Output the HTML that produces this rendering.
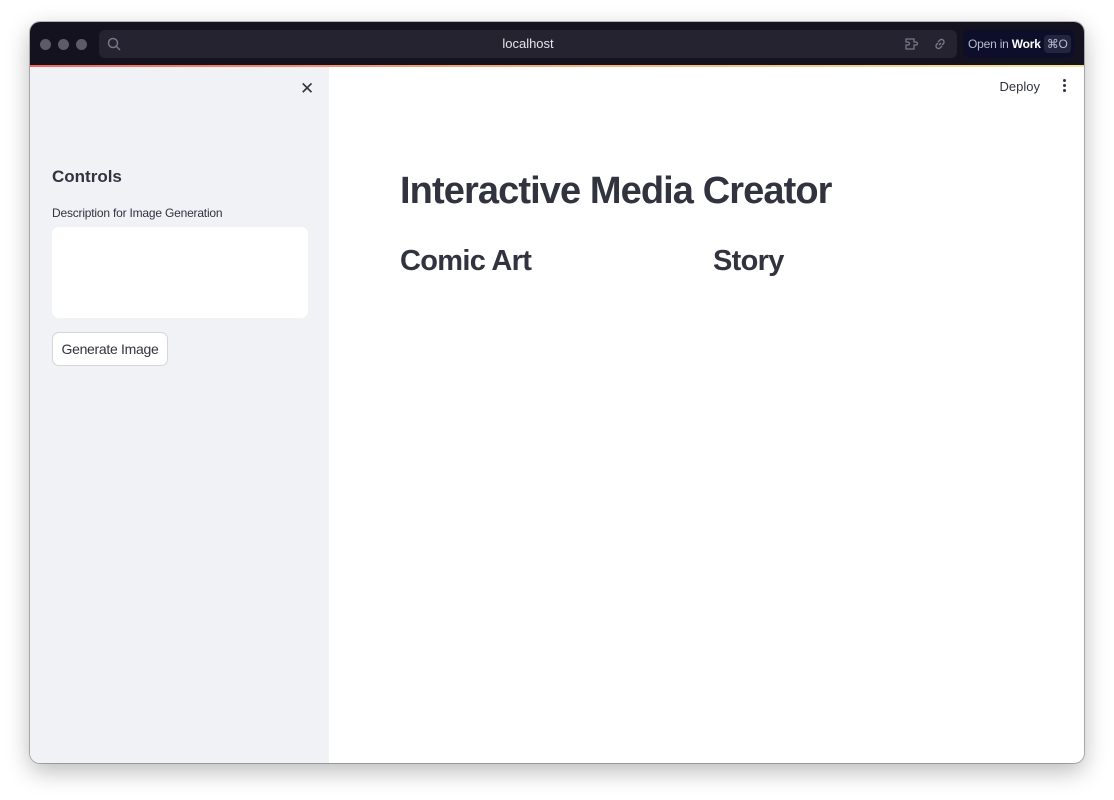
<!DOCTYPE html>
<html><head><meta charset="utf-8"><style>
*{box-sizing:border-box;margin:0;padding:0}
body{width:1114px;height:800px;background:#fff;font-family:"Liberation Sans",sans-serif;position:relative;overflow:hidden}
.win{position:absolute;left:30px;top:22px;width:1054px;height:741px;border-radius:10px;overflow:hidden;box-shadow:0 8px 24px rgba(0,0,0,.28),0 0 0 1px rgba(0,0,0,.25);background:#fff}
.bar{position:absolute;left:0;top:0;width:100%;height:43px;background:#14121f}
.dot{position:absolute;top:17px;width:11px;height:11px;border-radius:50%;background:#5d5c66}
.url{position:absolute;left:69px;top:8px;width:858px;height:28px;border-radius:6px;background:#25232f;color:#e4e4ea;font-size:13px;text-align:center;line-height:28px}
.open{position:absolute;left:933px;top:8px;width:112px;height:28px;border-radius:6px;background:#0d0f2a;color:#b9bad0;font-size:12px;line-height:28px;padding-left:5px;white-space:nowrap;letter-spacing:-0.2px}
.open b{color:#fff}
.open span{background:#23253e;padding:2px 3px;border-radius:4px;margin-left:3px}
.grad{position:absolute;left:0;top:43px;width:100%;height:2px;background:linear-gradient(90deg,#f06a5e,#f6b07a,#f6e39a)}
.side{position:absolute;left:0;top:45px;width:299px;height:696px;background:#f0f2f6}
.main{position:absolute;left:299px;top:45px;right:0;bottom:0;color:#31333f}
h3{position:absolute;left:22px;top:100px;font-size:17px;color:#31333f}
.lab{position:absolute;left:22px;top:139px;font-size:12px;color:#31333f;letter-spacing:-0.2px}
.ta{position:absolute;left:22px;top:160px;width:256px;height:91px;background:#fff;border-radius:7px}
.btn{position:absolute;left:22px;top:265px;width:116px;height:34px;border:1px solid #d5d6da;border-radius:7px;background:#fff;font-size:14px;line-height:32px;text-align:center;color:#31333f;letter-spacing:-0.3px}
.x{position:absolute;left:270px;top:12px;font-size:17px;color:#31333f}
</style></head><body>
<div class="win">
<div class="bar">
<div class="dot" style="left:10px"></div><div class="dot" style="left:28px"></div><div class="dot" style="left:46px"></div>
<div class="url">localhost
<svg style="position:absolute;left:8px;top:7px" width="14" height="14" viewBox="0 0 14 14" fill="none" stroke="#77768a" stroke-width="1.5"><circle cx="6" cy="6" r="4.5"/><path d="M9.5 9.5L13 13"/></svg>
<svg style="position:absolute;left:806px;top:7px" width="16" height="14" viewBox="0 0 16 14" fill="none" stroke="#77768a" stroke-width="1.3"><path d="M1 2h8v3h2a1.5 1.5 0 010 3H9v4H1V8h2a1.5 1.5 0 000-3H1z"/></svg>
<svg style="position:absolute;left:834px;top:7px" width="14" height="14" viewBox="0 0 14 14" fill="none" stroke="#77768a" stroke-width="1.4"><path d="M6 8l2-2M5 5l2-2a2.5 2.5 0 013.5 3.5L9 8M9 9l-2 2a2.5 2.5 0 01-3.5-3.5L5 6"/></svg>
</div>
<div class="open">Open in <b>Work</b><span>⌘O</span></div>
</div>
<div class="grad"></div>
<div class="side">
<div class="x">✕</div>
<h3>Controls</h3>
<div class="lab">Description for Image Generation</div>
<div class="ta"></div>
<div class="btn">Generate Image</div>
</div>
<div class="main">
<div style="position:absolute;right:44px;top:12px;font-size:13px">Deploy</div>
<div style="position:absolute;right:18px;top:12px;width:3px">
<div style="width:3px;height:3px;border-radius:50%;background:#31333f;margin-bottom:2px"></div><div style="width:3px;height:3px;border-radius:50%;background:#31333f;margin-bottom:2px"></div><div style="width:3px;height:3px;border-radius:50%;background:#31333f"></div></div>
<div style="position:absolute;left:71px;top:103px;font-size:38px;font-weight:bold;letter-spacing:-0.9px">Interactive Media Creator</div>
<div style="position:absolute;left:71px;top:178px;font-size:29px;font-weight:bold;letter-spacing:-0.7px">Comic Art</div>
<div style="position:absolute;left:384px;top:178px;font-size:29px;font-weight:bold;letter-spacing:-0.7px">Story</div>
</div>
</div>
</body></html>
